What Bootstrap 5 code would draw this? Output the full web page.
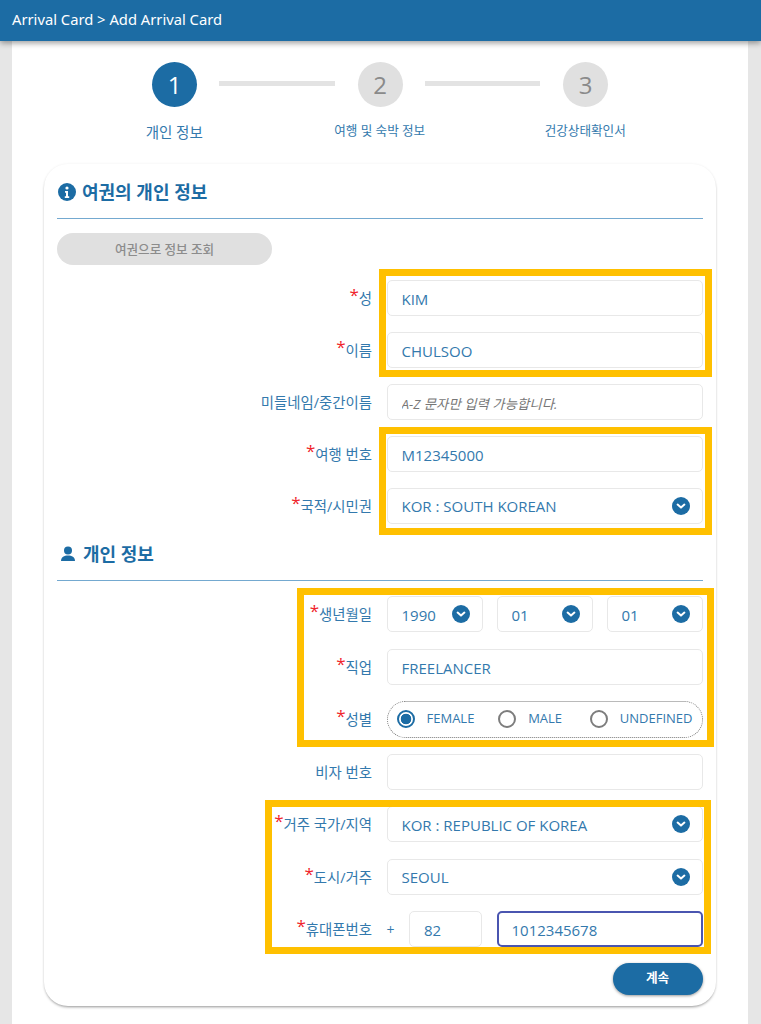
<!DOCTYPE html>
<html lang="ko">
<head>
<meta charset="utf-8">
<title>Add Arrival Card</title>
<link href="https://cdn.jsdelivr.net/npm/bootstrap@5.3.0/dist/css/bootstrap.min.css" rel="stylesheet">
<style>
:root{--blue:#1c6ca4;}
html,body{height:100%;}
body{background:#e6e6e6;font-family:"Open Sans","Noto Sans CJK KR",sans-serif;color:#3379ad;overflow:hidden;}
.topbar{height:41px;background:var(--blue);color:#fff;font:14.75px/39px "Noto Sans","Noto Sans CJK KR",sans-serif;padding-left:12px;box-shadow:0 2px 6px rgba(0,0,0,.4);position:relative;z-index:2;}
.sheet{width:736px;margin-left:12px;background:#fff;height:983px;padding:21px 32px 0;position:relative;}
.stepper{padding-left:108px;height:45px;}
.stepdot{width:45px;height:45px;flex:none;border-radius:50%;background:#e0e0e0;color:#8a8a8a;font-size:24px;line-height:45px;text-align:center;}
.stepdot.on{background:var(--blue);color:#fff;}
.stepline{width:115.5px;height:5px;flex:none;background:#e3e3e3;margin:-3px 23px 0 22px;}
.steplabels{display:grid;grid-template-columns:205.5px 205.5px 205.5px;margin-left:27.5px;height:57px;align-items:start;text-align:center;}
.steplabels span{font-size:12.6px;padding-top:15px;line-height:18px;}
.steplabels span.on{font-size:14.5px;padding-top:16px;line-height:20px;}
.formcard{background:#fff;border-radius:24px;box-shadow:0 2px 3px -1px rgba(0,0,0,.4),0 0 3px rgba(0,0,0,.06);height:842px;padding:0 13.5px 0 13px;position:relative;}
.sectitle{display:flex;align-items:center;gap:6px;font-size:18px;font-weight:700;color:var(--blue);border-bottom:1px solid #74a9d0;height:55px;padding-left:1px;padding-top:2px;}
.sectitle.two{height:41px;gap:5px;padding-top:0;padding-bottom:11px;}
.lookup{width:215px;height:32px;border:0;border-radius:16px;background:#e0e0e0;color:#8c8c8c;font-size:12.6px;font-weight:500;margin-top:14px;display:block;padding:2px 0 0;}
.frow{display:flex;align-items:center;height:36px;margin-bottom:16px;justify-content:flex-end;gap:14.5px;}
.frow.wide{margin-bottom:16.5px;}
.flabel{font-size:14.4px;line-height:20px;white-space:nowrap;padding-top:2px;}
.flabel i{color:#f01f2c;font-style:normal;font-size:17px;line-height:10px;vertical-align:3px;}
.ffield{width:316px;flex:none;}
.ffield .form-control,.ffield .form-select{height:36px;border:1px solid #e8e8e8;border-radius:5px;color:#3379ad;font-size:15px;padding:2px 14px 0;box-shadow:none;}
.ffield .form-control::placeholder{font-size:13.4px;font-style:italic;color:#777;}
.ffield .form-select{background-image:url("data:image/svg+xml,%3Csvg xmlns='http://www.w3.org/2000/svg' viewBox='0 0 18 18'%3E%3Ccircle cx='9' cy='9' r='9' fill='%231c6ca4'/%3E%3Cpath d='M5.6 7.6 9 10.6l3.4-3' fill='none' stroke='%23fff' stroke-width='2' stroke-linecap='round' stroke-linejoin='round'/%3E%3C/svg%3E");background-size:18px 18px;background-position:right 12px top 8px;background-repeat:no-repeat;}
.ffield .form-select.date-sel{width:96px;flex:none;}
.gendergroup{height:37px;border:1px dotted #777;border-radius:19px;padding:0 9px;display:flex;align-items:center;font-size:13px;}
.gendergroup label{display:flex;align-items:center;}
.gendergroup label:nth-child(1){width:102px;}
.gendergroup label:nth-child(2){width:92px;}
.gendergroup input{appearance:none;width:18px;height:18px;border:2px solid #7d7d7d;border-radius:50%;margin:0 12px 0 0;background:#fff;flex:none;}
.gendergroup input:checked{border-color:var(--blue);background:radial-gradient(circle,var(--blue) 0 5px,#fff 5.6px);}
.plus{width:8px;flex:none;margin-right:14.5px;font-size:14px;}
.ffield .form-control.active-edge{border:2px solid #4a55b0;padding-left:13px;padding-top:1px;}
.ffield .phonecode{width:73px;flex:none;margin-right:14.5px;}
.next{width:90px;height:32px;border:0;border-radius:16px;background:var(--blue);color:#fff;font-size:12.6px;font-weight:700;box-shadow:0 1px 3px rgba(0,0,0,.4);display:block;margin:-1px 0 0 auto;padding:0;}
.highlight{position:absolute;border:7px solid #ffc000;pointer-events:none;}
.hl-a{left:366.5px;top:228px;width:333px;height:108px;}
.hl-b{left:366.5px;top:386px;width:333px;height:108px;}
.hl-c{left:285px;top:547px;width:417px;height:159px;}
.hl-d{left:253px;top:759px;width:446px;height:154px;}
.spacer-a{height:14.5px;}
.spacer-b{height:15.5px;}
</style>
</head>
<body>
<div class="topbar">Arrival Card &gt; Add Arrival Card</div>
<div class="sheet">
  <div class="stepper d-flex align-items-center">
    <div class="stepdot on">1</div><div class="stepline"></div>
    <div class="stepdot">2</div><div class="stepline"></div>
    <div class="stepdot">3</div>
  </div>
  <div class="steplabels"><span class="on">개인 정보</span><span>여행 및 숙박 정보</span><span>건강상태확인서</span></div>
  <div class="formcard">
    <div class="sectitle">
      <svg width="18" height="18" viewBox="0 0 18 18"><circle cx="9" cy="9" r="9" fill="#1c6ca4"/><circle cx="9" cy="5" r="1.6" fill="#fff"/><path d="M7 8h3v5.2h1.2V15H6.8v-1.8H8V9.7H7z" fill="#fff"/></svg>
      <span>여권의 개인 정보</span>
    </div>
    <button class="lookup" type="button">여권으로 정보 조회</button>
    <div class="spacer-a"></div>
    <div class="frow"><span class="flabel"><i>*</i>성</span><div class="ffield"><input class="form-control" value="KIM"></div></div>
    <div class="frow"><span class="flabel"><i>*</i>이름</span><div class="ffield"><input class="form-control" value="CHULSOO"></div></div>
    <div class="frow"><span class="flabel">미들네임/중간이름</span><div class="ffield"><input class="form-control" placeholder="A-Z 문자만 입력 가능합니다."></div></div>
    <div class="frow"><span class="flabel"><i>*</i>여행 번호</span><div class="ffield"><input class="form-control" value="M12345000"></div></div>
    <div class="frow"><span class="flabel"><i>*</i>국적/시민권</span><div class="ffield"><select class="form-select"><option>KOR : SOUTH KOREAN</option></select></div></div>
    <div class="sectitle two">
      <svg width="20" height="18" viewBox="0 0 20 18"><circle cx="10" cy="5.5" r="4" fill="#1c6ca4"/><path d="M3 16c0-4 3.2-5.6 7-5.6s7 1.6 7 5.6z" fill="#1c6ca4"/></svg>
      <span>개인 정보</span>
    </div>
    <div class="spacer-b"></div>
    <div class="frow wide"><span class="flabel"><i>*</i>생년월일</span><div class="ffield d-flex justify-content-between">
      <select class="form-select date-sel"><option>1990</option></select>
      <select class="form-select date-sel"><option>01</option></select>
      <select class="form-select date-sel"><option>01</option></select>
    </div></div>
    <div class="frow wide"><span class="flabel"><i>*</i>직업</span><div class="ffield"><input class="form-control" value="FREELANCER"></div></div>
    <div class="frow wide"><span class="flabel"><i>*</i>성별</span><div class="ffield"><div class="gendergroup">
      <label><input type="radio" name="g" checked>FEMALE</label>
      <label><input type="radio" name="g">MALE</label>
      <label><input type="radio" name="g">UNDEFINED</label>
    </div></div></div>
    <div class="frow wide"><span class="flabel">비자 번호</span><div class="ffield"><input class="form-control"></div></div>
    <div class="frow wide"><span class="flabel"><i>*</i>거주 국가/지역</span><div class="ffield"><select class="form-select"><option>KOR : REPUBLIC OF KOREA</option></select></div></div>
    <div class="frow wide"><span class="flabel"><i>*</i>도시/거주</span><div class="ffield"><select class="form-select"><option>SEOUL</option></select></div></div>
    <div class="frow wide"><span class="flabel"><i>*</i>휴대폰번호</span><div class="ffield d-flex align-items-center">
      <span class="plus">+</span>
      <input class="form-control phonecode" value="82">
      <input class="form-control active-edge" value="1012345678">
    </div></div>
    <button class="next" type="button">계속</button>
  </div>
  <div class="highlight hl-a"></div>
  <div class="highlight hl-b"></div>
  <div class="highlight hl-c"></div>
  <div class="highlight hl-d"></div>
</div>
</body>
</html>
